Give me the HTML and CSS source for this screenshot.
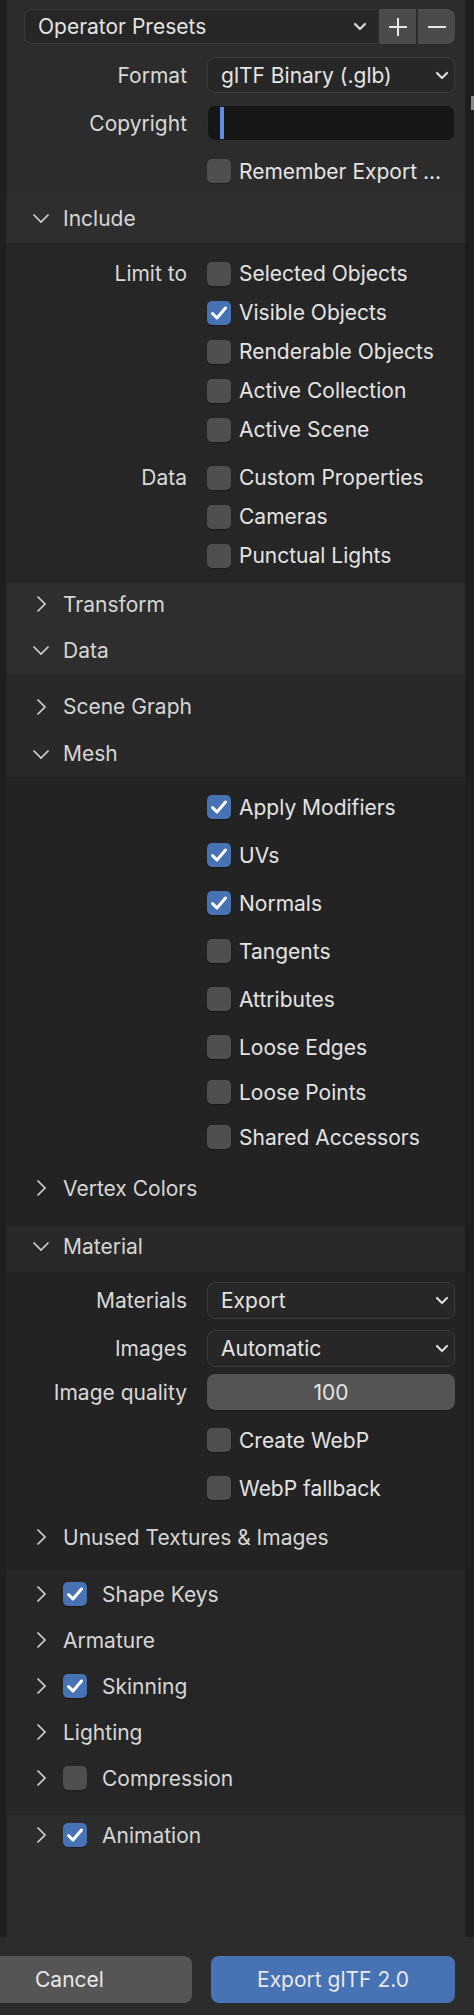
FILE: index.html
```html
<!DOCTYPE html>
<html>
<head>
<meta charset="utf-8">
<link rel="stylesheet" href="styles.css">
</head>
<body>
<div class="frame">
  <div class="side-left"></div>
  <div class="panel">
    <div class="top">
      <div class="presets">
        <div class="preset-select">
          <span>Operator Presets</span>
          <svg class="dd-chev" width="14" height="9" viewBox="0 0 14 9"><path d="M2 2l5 5 5-5" fill="none" stroke="#dcdcdc" stroke-width="2.2" stroke-linecap="round" stroke-linejoin="round"/></svg>
        </div>
        <div class="preset-btn"><svg width="22" height="22" viewBox="0 0 22 22"><path d="M11 2v18M2 11h18" stroke="#e6e6e6" stroke-width="2" fill="none"/></svg></div>
        <div class="preset-btn preset-btn-last"><svg width="22" height="22" viewBox="0 0 22 22"><path d="M2 11h18" stroke="#e6e6e6" stroke-width="2" fill="none"/></svg></div>
      </div>
      <div class="prop prop-format">
        <div class="label">Format</div>
        <div class="dropdown"><span>glTF Binary (.glb)</span><svg class="dd-chev" width="14" height="9" viewBox="0 0 14 9"><path d="M2 2l5 5 5-5" fill="none" stroke="#dcdcdc" stroke-width="2.2" stroke-linecap="round" stroke-linejoin="round"/></svg></div>
      </div>
      <div class="prop prop-copyright">
        <div class="label">Copyright</div>
        <div class="textfield"><span class="cursor"></span></div>
      </div>
      <div class="prop prop-check">
        <div class="label"></div>
        <div class="check-item"><span class="cb"></span><span>Remember Export ...</span></div>
      </div>
    </div>

    <div class="hdr hdr-top band-include-h">
      <span class="chev"><svg width="18" height="12" viewBox="0 0 18 12"><path d="M1.5 2.5l7.5 7.5 7.5-7.5" fill="none" stroke="#cfcfcf" stroke-width="1.7"/></svg></span>
      <span class="hdr-text">Include</span>
    </div>
    <div class="content include-content">
      <div class="prop prop-row39">
        <div class="label">Limit to</div>
        <div class="check-item"><span class="cb"></span><span>Selected Objects</span></div>
      </div>
      <div class="prop prop-row39">
        <div class="label"></div>
        <div class="check-item"><span class="cb cb-on"><svg viewBox="0 0 24 24" width="24" height="24"><path d="M5.5 12.5l4.5 4.5 8.5-10" fill="none" stroke="#fff" stroke-width="3" stroke-linecap="round" stroke-linejoin="round"/></svg></span><span>Visible Objects</span></div>
      </div>
      <div class="prop prop-row39">
        <div class="label"></div>
        <div class="check-item"><span class="cb"></span><span>Renderable Objects</span></div>
      </div>
      <div class="prop prop-row39">
        <div class="label"></div>
        <div class="check-item"><span class="cb"></span><span>Active Collection</span></div>
      </div>
      <div class="prop prop-row39">
        <div class="label"></div>
        <div class="check-item"><span class="cb"></span><span>Active Scene</span></div>
      </div>
      <div class="prop prop-row39 group-gap">
        <div class="label">Data</div>
        <div class="check-item"><span class="cb"></span><span>Custom Properties</span></div>
      </div>
      <div class="prop prop-row39">
        <div class="label"></div>
        <div class="check-item"><span class="cb"></span><span>Cameras</span></div>
      </div>
      <div class="prop prop-row39">
        <div class="label"></div>
        <div class="check-item"><span class="cb"></span><span>Punctual Lights</span></div>
      </div>
    </div>

    <div class="band-top-headers">
      <div class="hdr hdr-top">
        <span class="chev"><svg width="12" height="18" viewBox="0 0 12 18"><path d="M2.5 1.5l7.5 7.5-7.5 7.5" fill="none" stroke="#cfcfcf" stroke-width="1.7"/></svg></span>
        <span class="hdr-text">Transform</span>
      </div>
      <div class="hdr hdr-top">
        <span class="chev"><svg width="18" height="12" viewBox="0 0 18 12"><path d="M1.5 2.5l7.5 7.5 7.5-7.5" fill="none" stroke="#cfcfcf" stroke-width="1.7"/></svg></span>
        <span class="hdr-text">Data</span>
      </div>
    </div>

    <div class="band-sub-headers">
      <div class="hdr hdr-sub">
        <span class="chev"><svg width="12" height="18" viewBox="0 0 12 18"><path d="M2.5 1.5l7.5 7.5-7.5 7.5" fill="none" stroke="#cfcfcf" stroke-width="1.7"/></svg></span>
        <span class="hdr-text">Scene Graph</span>
      </div>
      <div class="hdr hdr-sub">
        <span class="chev"><svg width="18" height="12" viewBox="0 0 18 12"><path d="M1.5 2.5l7.5 7.5 7.5-7.5" fill="none" stroke="#cfcfcf" stroke-width="1.7"/></svg></span>
        <span class="hdr-text">Mesh</span>
      </div>
    </div>

    <div class="content mesh-content">
      <div class="prop prop-row48">
        <div class="label"></div>
        <div class="check-item"><span class="cb cb-on"><svg viewBox="0 0 24 24" width="24" height="24"><path d="M5.5 12.5l4.5 4.5 8.5-10" fill="none" stroke="#fff" stroke-width="3" stroke-linecap="round" stroke-linejoin="round"/></svg></span><span>Apply Modifiers</span></div>
      </div>
      <div class="prop prop-row48">
        <div class="label"></div>
        <div class="check-item"><span class="cb cb-on"><svg viewBox="0 0 24 24" width="24" height="24"><path d="M5.5 12.5l4.5 4.5 8.5-10" fill="none" stroke="#fff" stroke-width="3" stroke-linecap="round" stroke-linejoin="round"/></svg></span><span>UVs</span></div>
      </div>
      <div class="prop prop-row48">
        <div class="label"></div>
        <div class="check-item"><span class="cb cb-on"><svg viewBox="0 0 24 24" width="24" height="24"><path d="M5.5 12.5l4.5 4.5 8.5-10" fill="none" stroke="#fff" stroke-width="3" stroke-linecap="round" stroke-linejoin="round"/></svg></span><span>Normals</span></div>
      </div>
      <div class="prop prop-row48">
        <div class="label"></div>
        <div class="check-item"><span class="cb"></span><span>Tangents</span></div>
      </div>
      <div class="prop prop-row48 shift2">
        <div class="label"></div>
        <div class="check-item"><span class="cb"></span><span>Attributes</span></div>
      </div>
      <div class="prop prop-row48">
        <div class="label"></div>
        <div class="check-item"><span class="cb"></span><span>Loose Edges</span></div>
      </div>
      <div class="prop prop-row42">
        <div class="label"></div>
        <div class="check-item"><span class="cb"></span><span>Loose Points</span></div>
      </div>
      <div class="prop prop-row48">
        <div class="label"></div>
        <div class="check-item"><span class="cb"></span><span>Shared Accessors</span></div>
      </div>
      <div class="hdr hdr-sub vc-hdr">
        <span class="chev"><svg width="12" height="18" viewBox="0 0 12 18"><path d="M2.5 1.5l7.5 7.5-7.5 7.5" fill="none" stroke="#cfcfcf" stroke-width="1.7"/></svg></span>
        <span class="hdr-text">Vertex Colors</span>
      </div>
    </div>

    <div class="hdr hdr-mat band-mat-h">
      <span class="chev"><svg width="18" height="12" viewBox="0 0 18 12"><path d="M1.5 2.5l7.5 7.5 7.5-7.5" fill="none" stroke="#cfcfcf" stroke-width="1.7"/></svg></span>
      <span class="hdr-text">Material</span>
    </div>
    <div class="content mat-content">
      <div class="prop prop-materials">
        <div class="label">Materials</div>
        <div class="dropdown"><span>Export</span><svg class="dd-chev" width="14" height="9" viewBox="0 0 14 9"><path d="M2 2l5 5 5-5" fill="none" stroke="#dcdcdc" stroke-width="2.2" stroke-linecap="round" stroke-linejoin="round"/></svg></div>
      </div>
      <div class="prop prop-images">
        <div class="label">Images</div>
        <div class="dropdown"><span>Automatic</span><svg class="dd-chev" width="14" height="9" viewBox="0 0 14 9"><path d="M2 2l5 5 5-5" fill="none" stroke="#dcdcdc" stroke-width="2.2" stroke-linecap="round" stroke-linejoin="round"/></svg></div>
      </div>
      <div class="prop prop-quality">
        <div class="label">Image quality</div>
        <div class="slider">100</div>
      </div>
      <div class="prop prop-row48 webp-first">
        <div class="label"></div>
        <div class="check-item"><span class="cb"></span><span>Create WebP</span></div>
      </div>
      <div class="prop prop-row48">
        <div class="label"></div>
        <div class="check-item"><span class="cb"></span><span>WebP fallback</span></div>
      </div>
      <div class="hdr hdr-sub unused-hdr">
        <span class="chev"><svg width="12" height="18" viewBox="0 0 12 18"><path d="M2.5 1.5l7.5 7.5-7.5 7.5" fill="none" stroke="#cfcfcf" stroke-width="1.7"/></svg></span>
        <span class="hdr-text">Unused Textures &amp; Images</span>
      </div>
    </div>

    <div class="band-misc">
      <div class="hdr hdr-sub">
        <span class="chev"><svg width="12" height="18" viewBox="0 0 12 18"><path d="M2.5 1.5l7.5 7.5-7.5 7.5" fill="none" stroke="#cfcfcf" stroke-width="1.7"/></svg></span>
        <span class="cb cb-on hdr-cb"><svg viewBox="0 0 24 24" width="24" height="24"><path d="M5.5 12.5l4.5 4.5 8.5-10" fill="none" stroke="#fff" stroke-width="3" stroke-linecap="round" stroke-linejoin="round"/></svg></span>
        <span class="hdr-text hdr-text-cb">Shape Keys</span>
      </div>
      <div class="hdr hdr-sub">
        <span class="chev"><svg width="12" height="18" viewBox="0 0 12 18"><path d="M2.5 1.5l7.5 7.5-7.5 7.5" fill="none" stroke="#cfcfcf" stroke-width="1.7"/></svg></span>
        <span class="hdr-text">Armature</span>
      </div>
      <div class="hdr hdr-sub">
        <span class="chev"><svg width="12" height="18" viewBox="0 0 12 18"><path d="M2.5 1.5l7.5 7.5-7.5 7.5" fill="none" stroke="#cfcfcf" stroke-width="1.7"/></svg></span>
        <span class="cb cb-on hdr-cb"><svg viewBox="0 0 24 24" width="24" height="24"><path d="M5.5 12.5l4.5 4.5 8.5-10" fill="none" stroke="#fff" stroke-width="3" stroke-linecap="round" stroke-linejoin="round"/></svg></span>
        <span class="hdr-text hdr-text-cb">Skinning</span>
      </div>
      <div class="hdr hdr-sub">
        <span class="chev"><svg width="12" height="18" viewBox="0 0 12 18"><path d="M2.5 1.5l7.5 7.5-7.5 7.5" fill="none" stroke="#cfcfcf" stroke-width="1.7"/></svg></span>
        <span class="hdr-text">Lighting</span>
      </div>
      <div class="hdr hdr-sub">
        <span class="chev"><svg width="12" height="18" viewBox="0 0 12 18"><path d="M2.5 1.5l7.5 7.5-7.5 7.5" fill="none" stroke="#cfcfcf" stroke-width="1.7"/></svg></span>
        <span class="cb hdr-cb"></span>
        <span class="hdr-text hdr-text-cb">Compression</span>
      </div>
    </div>

    <div class="band-anim">
      <div class="hdr hdr-anim">
        <span class="chev"><svg width="12" height="18" viewBox="0 0 12 18"><path d="M2.5 1.5l7.5 7.5-7.5 7.5" fill="none" stroke="#cfcfcf" stroke-width="1.7"/></svg></span>
        <span class="cb cb-on hdr-cb"><svg viewBox="0 0 24 24" width="24" height="24"><path d="M5.5 12.5l4.5 4.5 8.5-10" fill="none" stroke="#fff" stroke-width="3" stroke-linecap="round" stroke-linejoin="round"/></svg></span>
        <span class="hdr-text hdr-text-cb">Animation</span>
      </div>
    </div>
  </div>
  <div class="side-right"><span class="scroll-mark"></span></div>
</div>
<div class="footer">
  <div class="btn btn-cancel">Cancel</div>
  <div class="btn btn-export">Export glTF 2.0</div>
</div>
</body>
</html>
```

FILE: styles.css
```css
* { box-sizing: border-box; }
html, body { margin: 0; padding: 0; }
body {
  width: 474px;
  height: 2015px;
  overflow: hidden;
  background: #2c2c2c;
  font-family: Inter, "Noto Sans", sans-serif;
  font-size: 21px;
  color: #e4e4e4;
}
svg { display: block; }

.frame { display: flex; height: 1937px; }
.side-left {
  width: 7px;
  background: #1f1f1f;
  border-right: 1px solid #262626;
}
.panel { width: 458px; background: #2c2c2c; display: flex; flex-direction: column; }
.side-right { width: 9px; background: #1e1e1e; position: relative; }
.scroll-mark { position: absolute; left: 6px; top: 96px; width: 3px; height: 14px; background: #8a8a8a; }

/* top section */
.top { padding: 9px 0 8px 0; }
.presets { display: flex; height: 35px; margin-left: 17px; width: 431px; }
.preset-select {
  flex: 1;
  display: flex; align-items: center; justify-content: space-between;
  background: #262626;
  border: 1px solid #3a3a3a;
  border-right: none;
  border-radius: 8px 0 0 8px;
  padding: 0 10px 0 13px;
}
.preset-btn {
  width: 37px; margin-left: 2px;
  background: #4b4b4b;
  display: flex; align-items: center; justify-content: center;
}
.preset-btn-last { border-radius: 0 8px 8px 0; }

.prop {
  display: grid;
  grid-template-columns: 180px 248px;
  column-gap: 20px;
  align-items: center;
}
.label { text-align: right; color: #d9d9d9; }
.prop-format { height: 36px; margin-top: 13px; }
.prop-copyright { height: 36px; margin-top: 12px; }
.prop-check { height: 36px; margin-top: 12px; }

.dropdown {
  height: 100%;
  display: flex; align-items: center; justify-content: space-between;
  background: #272727;
  border: 1px solid #3b3b3b;
  border-radius: 8px;
  padding: 0 5px 0 13px;
}
.textfield {
  height: 100%;
  background: #161616;
  border: 1px solid #2e2e2e;
  border-radius: 8px;
  padding: 1px 0 1px 12px;
  display: flex;
}
.cursor { width: 4px; height: 100%; background: #5f8fdf; }

.check-item { display: flex; align-items: center; gap: 8px; white-space: nowrap; }
.cb {
  width: 24px; height: 24px; flex: none;
  background: #4f4f4f;
  border-radius: 5px;
  box-shadow: 0 1px 1px rgba(0,0,0,0.35);
}
.cb-on { background: #4772b3; }

/* headers */
.hdr { display: flex; align-items: center; height: 46px; padding-left: 25px; }
.hdr-top { padding-bottom: 4px; }
.hdr-mat { padding-bottom: 6px; }
.hdr-anim { padding-bottom: 6px; }
.chev { width: 18px; display: flex; justify-content: center; }
.hdr-text { margin-left: 13px; color: #d6d6d6; }
.hdr-cb { margin-left: 13px; }
.hdr-text-cb { margin-left: 15px; }

.band-include-h { background: #2e2e2e; }
.include-content { background: #262626; padding: 11px 0 8px 0; }
.prop-row39 { height: 39px; }
.group-gap { margin-top: 9px; }

.band-top-headers { background: #2e2e2e; }
.band-sub-headers { background: #292929; padding-top: 8px; }
.band-sub-headers .hdr-sub { height: 47px; }

.mesh-content { background: #232323; padding: 6px 0 15px 0; }
.prop-row48 { height: 48px; }
.prop-row42 { height: 42px; }
.shift2 { }
.vc-hdr { margin-top: 4px; }

.band-mat-h { background: #292929; }
.mat-content { background: #232323; padding: 10px 0 11px 0; }
.prop-materials { height: 37px; }
.prop-images { height: 37px; margin-top: 11px; }
.prop-quality { height: 36px; margin-top: 7px; }
.slider {
  height: 100%;
  background: #545454;
  border-radius: 8px;
  display: flex; align-items: center; justify-content: center;
  box-shadow: 0 1px 1px rgba(0,0,0,0.3);
}
.webp-first { margin-top: 6px; }
.unused-hdr { margin-top: 2px; }

.band-misc { background: #262626; padding-bottom: 14px; }
.band-anim { background: #2c2c2c; flex: 1; }

/* footer */
.footer { display: flex; gap: 19px; padding-top: 19px; }
.btn {
  height: 47px;
  border-radius: 8px;
  display: flex; align-items: center; justify-content: center;
  color: #e8e8e8;
}
.btn-cancel { width: 200px; margin-left: -8px; background: #555555; justify-content: flex-start; padding-left: 43px; }
.btn-export { width: 244px; background: #4772b3; }
```
